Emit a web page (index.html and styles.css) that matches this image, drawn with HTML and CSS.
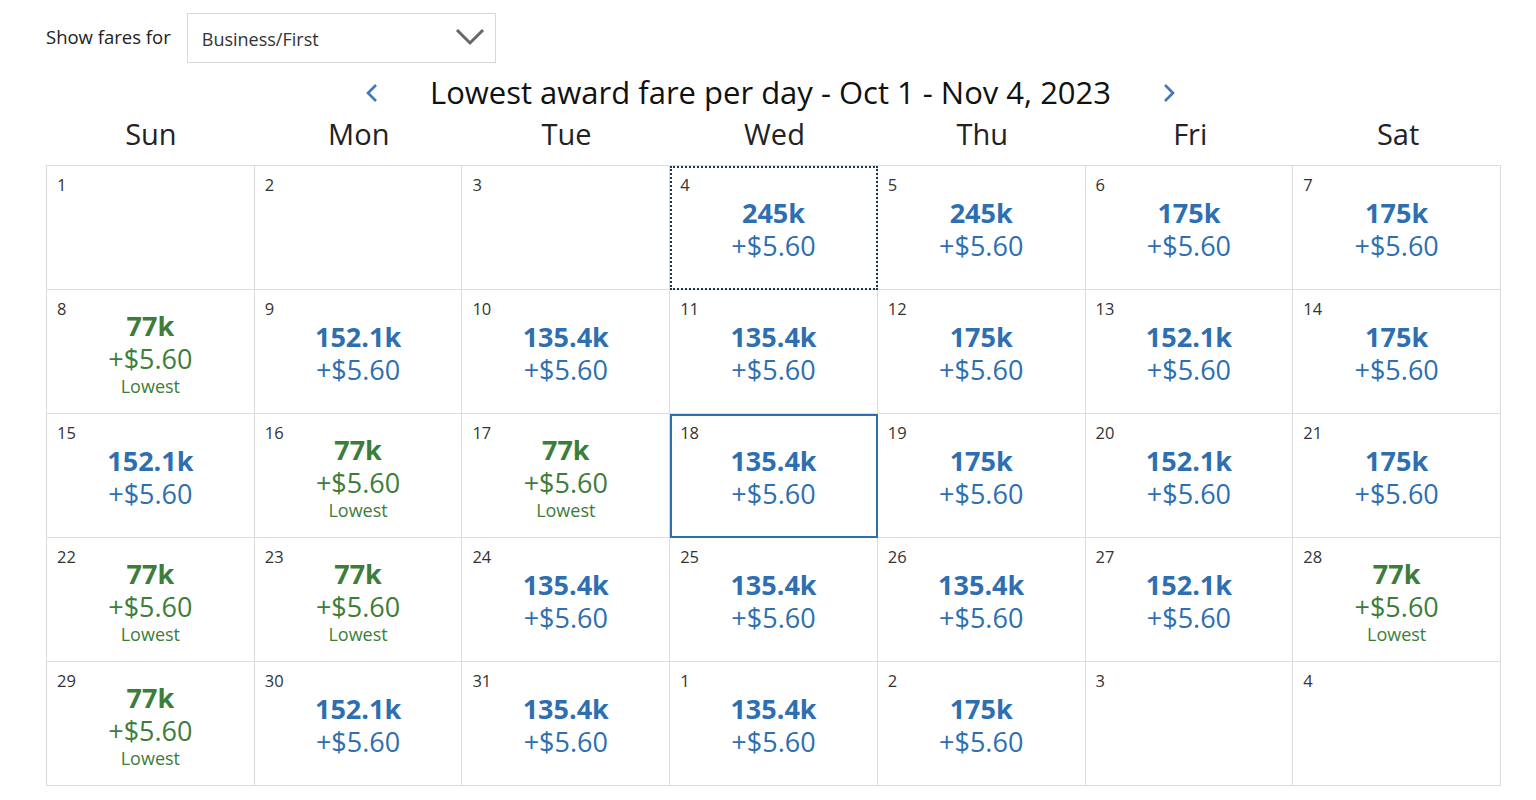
FILE: index.html
```html
<!DOCTYPE html>
<html lang="en">
<head>
<meta charset="utf-8">
<title>Award calendar</title>
<link rel="stylesheet" href="styles.css">
</head>
<body>
<div class="page">
  <div class="filter">
    <span class="filter-label">Show fares for</span>
    <div class="select">
      <span class="select-value">Business/First</span>
      <svg class="select-arrow" width="30" height="18" viewBox="0 0 30 18"><path d="M2 2 L15 15 L28 2" fill="none" stroke="#666" stroke-width="3"/></svg>
    </div>
  </div>
  <div class="title-row">
    <svg class="nav" width="16" height="22" viewBox="0 0 16 22"><path d="M12 3 L4 11 L12 19" fill="none" stroke="#3f78bd" stroke-width="2.6"/></svg>
    <h1 class="title">Lowest award fare per day - Oct 1 - Nov 4, 2023</h1>
    <svg class="nav" width="16" height="22" viewBox="0 0 16 22"><path d="M4 3 L12 11 L4 19" fill="none" stroke="#3f78bd" stroke-width="2.6"/></svg>
  </div>
  <div class="weekdays">
    <div>Sun</div><div>Mon</div><div>Tue</div><div>Wed</div><div>Thu</div><div>Fri</div><div>Sat</div>
  </div>
  <div class="calendar">
    <div class="cell"><span class="day">1</span></div>
    <div class="cell"><span class="day">2</span></div>
    <div class="cell"><span class="day">3</span></div>
    <div class="cell focus"><span class="day">4</span><div class="fare"><div class="pts">245k</div><div class="fee">+$5.60</div></div></div>
    <div class="cell"><span class="day">5</span><div class="fare"><div class="pts">245k</div><div class="fee">+$5.60</div></div></div>
    <div class="cell"><span class="day">6</span><div class="fare"><div class="pts">175k</div><div class="fee">+$5.60</div></div></div>
    <div class="cell"><span class="day">7</span><div class="fare"><div class="pts">175k</div><div class="fee">+$5.60</div></div></div>

    <div class="cell"><span class="day">8</span><div class="fare low"><div class="pts">77k</div><div class="fee">+$5.60</div><div class="tag">Lowest</div></div></div>
    <div class="cell"><span class="day">9</span><div class="fare"><div class="pts">152.1k</div><div class="fee">+$5.60</div></div></div>
    <div class="cell"><span class="day">10</span><div class="fare"><div class="pts">135.4k</div><div class="fee">+$5.60</div></div></div>
    <div class="cell"><span class="day">11</span><div class="fare"><div class="pts">135.4k</div><div class="fee">+$5.60</div></div></div>
    <div class="cell"><span class="day">12</span><div class="fare"><div class="pts">175k</div><div class="fee">+$5.60</div></div></div>
    <div class="cell"><span class="day">13</span><div class="fare"><div class="pts">152.1k</div><div class="fee">+$5.60</div></div></div>
    <div class="cell"><span class="day">14</span><div class="fare"><div class="pts">175k</div><div class="fee">+$5.60</div></div></div>

    <div class="cell"><span class="day">15</span><div class="fare"><div class="pts">152.1k</div><div class="fee">+$5.60</div></div></div>
    <div class="cell"><span class="day">16</span><div class="fare low"><div class="pts">77k</div><div class="fee">+$5.60</div><div class="tag">Lowest</div></div></div>
    <div class="cell"><span class="day">17</span><div class="fare low"><div class="pts">77k</div><div class="fee">+$5.60</div><div class="tag">Lowest</div></div></div>
    <div class="cell selected"><span class="day">18</span><div class="fare"><div class="pts">135.4k</div><div class="fee">+$5.60</div></div></div>
    <div class="cell"><span class="day">19</span><div class="fare"><div class="pts">175k</div><div class="fee">+$5.60</div></div></div>
    <div class="cell"><span class="day">20</span><div class="fare"><div class="pts">152.1k</div><div class="fee">+$5.60</div></div></div>
    <div class="cell"><span class="day">21</span><div class="fare"><div class="pts">175k</div><div class="fee">+$5.60</div></div></div>

    <div class="cell"><span class="day">22</span><div class="fare low"><div class="pts">77k</div><div class="fee">+$5.60</div><div class="tag">Lowest</div></div></div>
    <div class="cell"><span class="day">23</span><div class="fare low"><div class="pts">77k</div><div class="fee">+$5.60</div><div class="tag">Lowest</div></div></div>
    <div class="cell"><span class="day">24</span><div class="fare"><div class="pts">135.4k</div><div class="fee">+$5.60</div></div></div>
    <div class="cell"><span class="day">25</span><div class="fare"><div class="pts">135.4k</div><div class="fee">+$5.60</div></div></div>
    <div class="cell"><span class="day">26</span><div class="fare"><div class="pts">135.4k</div><div class="fee">+$5.60</div></div></div>
    <div class="cell"><span class="day">27</span><div class="fare"><div class="pts">152.1k</div><div class="fee">+$5.60</div></div></div>
    <div class="cell"><span class="day">28</span><div class="fare low"><div class="pts">77k</div><div class="fee">+$5.60</div><div class="tag">Lowest</div></div></div>

    <div class="cell"><span class="day">29</span><div class="fare low"><div class="pts">77k</div><div class="fee">+$5.60</div><div class="tag">Lowest</div></div></div>
    <div class="cell"><span class="day">30</span><div class="fare"><div class="pts">152.1k</div><div class="fee">+$5.60</div></div></div>
    <div class="cell"><span class="day">31</span><div class="fare"><div class="pts">135.4k</div><div class="fee">+$5.60</div></div></div>
    <div class="cell"><span class="day">1</span><div class="fare"><div class="pts">135.4k</div><div class="fee">+$5.60</div></div></div>
    <div class="cell"><span class="day">2</span><div class="fare"><div class="pts">175k</div><div class="fee">+$5.60</div></div></div>
    <div class="cell"><span class="day">3</span></div>
    <div class="cell"><span class="day">4</span></div>
  </div>
</div>
</body>
</html>
```

FILE: styles.css
```css
* { box-sizing: border-box; }
html, body { margin: 0; padding: 0; background: #fff; }
body {
  font-family: "Open Sans", "Noto Sans", "DejaVu Sans", sans-serif;
  color: #222;
}
.page {
  width: 1455px;
  margin-left: 46px;
  padding-top: 13px;
}
.filter {
  display: flex;
  align-items: center;
  gap: 16px;
}
.filter-label {
  font-size: 18.5px;
  color: #222;
  margin-top: -4px;
}
.select {
  width: 309px;
  height: 50px;
  border: 1px solid #d8d8d8;
  display: flex;
  align-items: center;
  justify-content: space-between;
  padding: 0 10px 0 14px;
}
.select-value {
  font-size: 18px;
  color: #333;
  padding-top: 2px;
}
.select-arrow { display: block; margin-top: -2px; }
.title-row {
  display: flex;
  justify-content: center;
  align-items: center;
  gap: 50px;
  margin-top: 9px;
  padding-right: 6px;
  height: 40px;
}
.nav { display: block; margin-top: 2px; }
.title {
  margin: 0;
  font-size: 31px;
  font-weight: 400;
  line-height: 40px;
  color: #111;
}
.weekdays {
  display: grid;
  grid-template-columns: repeat(7, 1fr);
  margin-top: 4px;
  height: 49px;
}
.weekdays div {
  text-align: center;
  font-size: 29px;
  line-height: 36px;
  color: #222;
  padding-left: 2px;
}
.calendar {
  display: grid;
  grid-template-columns: repeat(7, 1fr);
  grid-auto-rows: 124px;
  border-left: 1px solid #dcdcdc;
  border-top: 1px solid #dcdcdc;
}
.cell {
  display: grid;
  border-right: 1px solid #dcdcdc;
  border-bottom: 1px solid #dcdcdc;
}
.cell > * { grid-area: 1 / 1; }
.day {
  align-self: start;
  justify-self: start;
  font-size: 16.5px;
  line-height: 22px;
  color: #333;
  padding: 8px 0 0 10px;
}
.fare {
  align-self: center;
  justify-self: center;
  text-align: center;
  color: #2d6fb0;
  margin-top: 2px;
}
.fare.low { color: #3d7d3a; margin-top: 2px; }
.pts {
  font-size: 27px;
  font-weight: 700;
  line-height: 33px;
}
.fee {
  font-size: 27px;
  line-height: 33px;
}
.tag {
  font-size: 18px;
  line-height: 22px;
}
.focus {
  outline: 2px dotted #1e3550;
  outline-offset: -2px;
}
.selected {
  outline: 2px solid #2d6fb0;
  outline-offset: -2px;
}
```
